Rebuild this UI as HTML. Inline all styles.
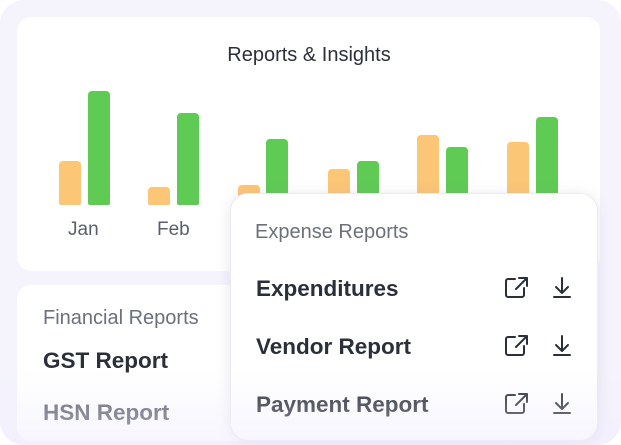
<!DOCTYPE html><html><head><style>
*{margin:0;padding:0;box-sizing:border-box}
html,body{width:621px;height:445px;overflow:hidden}
body{background:#fff;font-family:"Liberation Sans",sans-serif;position:relative}
.outer{position:absolute;left:0;top:0;width:621px;height:445px;background:#f5f4fd;border-radius:24px;overflow:hidden}
.card{position:absolute;background:#fff;border-radius:14px}
.t{position:absolute;white-space:nowrap}
.bar{position:absolute;border-radius:4px 4px 2px 2px}
.o{background:#fcc677;width:22px}.g{background:#5fcb55;width:22px}
.fade{position:absolute;left:0;right:0;top:370px;height:75px;background:linear-gradient(rgba(245,244,253,0),rgba(238,236,252,0.5));pointer-events:none}
.item{position:absolute;left:25px;font-weight:bold;font-size:22.5px;color:#2a2f3a}
svg{position:absolute}
</style></head><body>
<div class="outer">
<div class="card" style="left:17px;top:17px;width:583px;height:254px"></div>
<div class="t" style="left:0;width:618px;text-align:center;top:44px;font-size:20px;color:#2c303a">Reports &amp; Insights</div>
<div class="bar o" style="left:59px;top:161px;height:44px"></div>
<div class="bar g" style="left:88px;top:91px;height:114px"></div>
<div class="bar o" style="left:148px;top:187px;height:18px"></div>
<div class="bar g" style="left:177px;top:113px;height:92px"></div>
<div class="bar o" style="left:238px;top:185px;height:20px"></div>
<div class="bar g" style="left:266px;top:139px;height:66px"></div>
<div class="bar o" style="left:328px;top:169px;height:36px"></div>
<div class="bar g" style="left:357px;top:161px;height:44px"></div>
<div class="bar o" style="left:417px;top:135px;height:70px"></div>
<div class="bar g" style="left:446px;top:147px;height:58px"></div>
<div class="bar o" style="left:507px;top:142px;height:63px"></div>
<div class="bar g" style="left:536px;top:117px;height:88px"></div>
<div class="t" style="left:68px;top:219px;font-size:19px;color:#5a5f6a">Jan</div>
<div class="t" style="left:157px;top:219px;font-size:19px;color:#5a5f6a">Feb</div>

<div class="card" style="left:17px;top:285px;width:240px;height:156px"></div>
<div class="t" style="left:43px;top:307px;font-size:20px;color:#6b707b">Financial Reports</div>
<div class="t" style="left:43px;top:348px;font-size:22.5px;font-weight:bold;color:#2a2f3a">GST Report</div>
<div class="t" style="left:43px;top:400px;font-size:22.5px;font-weight:bold;color:#5f6270">HSN Report</div>

<div class="card" style="left:230px;top:193px;width:368px;height:248px;border-radius:18px;box-shadow:0 2px 14px rgba(120,120,160,0.18);border:1px solid #ecebf4">
<div class="t" style="left:24px;top:27px;font-size:20px;color:#6b707b">Expense Reports</div>
<div class="item" style="top:82px">Expenditures</div>
<div class="item" style="top:140px">Vendor Report</div>
<div class="item" style="top:198px">Payment Report</div>
</div>
<svg width="621" height="445" style="left:0;top:0" fill="none" stroke="#2a2f3a" stroke-width="2" stroke-linecap="round" stroke-linejoin="round">
<g id="r1">
<path d="M515 279h-7a2 2 0 0 0-2 2v14a2 2 0 0 0 2 2h14a2 2 0 0 0 2-2v-7M519 278h8v8M527 278l-11 11"/>
<path d="M562 278v15M556 287l6 6 6-6M554 297h16"/>
</g>
<use href="#r1" y="58"/>
<use href="#r1" y="116"/>
</svg>
<div class="fade"></div>
</div>
</body></html>
